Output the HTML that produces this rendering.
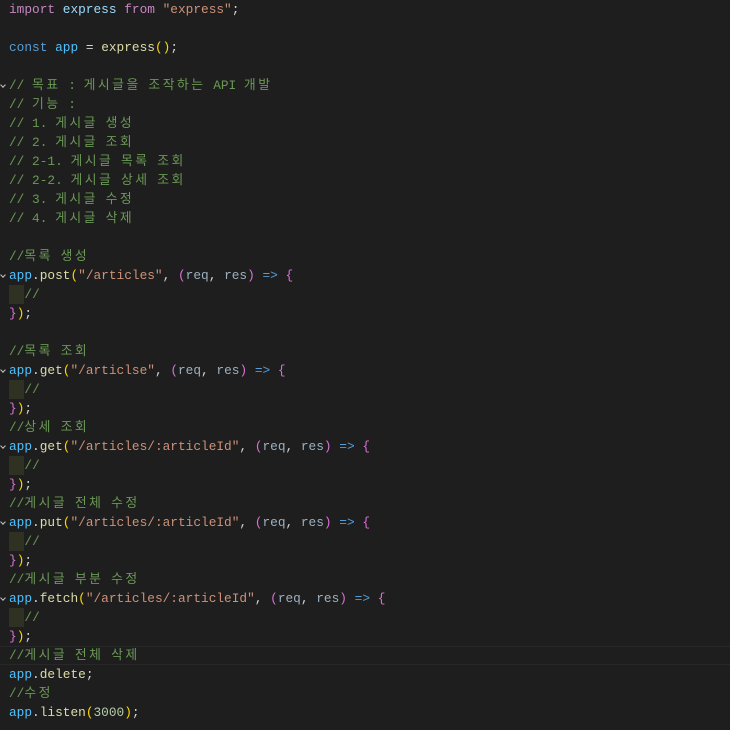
<!DOCTYPE html><html><head><style>
body{margin:0;background:#1e1e1e;width:730px;height:730px;overflow:hidden}
.e{margin:0;padding:0 0 0 9px;font:12.8px/19px "Liberation Mono","Noto Sans CJK KR",monospace;color:#d4d4d4;position:relative}
.l{height:19px;white-space:pre;position:relative}
.k{color:#c586c0}.v{color:#9cdcfe}.f{color:#dcdcaa}.s{color:#ce9178}.c{color:#6a9955}.b{color:#569cd6}.a{color:#4fc1ff}.p{color:#9cb0c0}
.y{color:#ffd700}.m{color:#da70d6}.u{color:#179fff}.n{color:#b5cea8}
.h{letter-spacing:2.5px}
.fold:before{content:"";position:absolute;left:-8px;top:7px;width:3px;height:3px;border-right:1px solid #c5c5c5;border-bottom:1px solid #c5c5c5;transform:rotate(45deg)}
.ind{display:inline-block;width:15.4px;height:19px;background:#2f3122;vertical-align:top}
.cur{box-shadow:inset 0 1px 0 #282828,inset 0 -1px 0 #282828;margin-left:-9px;padding-left:9px}
</style></head><body><div class="e"><div class="l"><span class="k">import</span> <span class="v">express</span> <span class="k">from</span> <span class="s">"express"</span>;</div><div class="l"></div><div class="l"><span class="b">const</span> <span class="a">app</span> = <span class="f">express</span><span class="y">()</span>;</div><div class="l"></div><div class="l fold c">// <span class="h">목표</span> : <span class="h">게시글을</span> <span class="h">조작하는</span> API <span class="h">개발</span></div><div class="l c">// <span class="h">기능</span> :</div><div class="l c">// 1. <span class="h">게시글</span> <span class="h">생성</span></div><div class="l c">// 2. <span class="h">게시글</span> <span class="h">조회</span></div><div class="l c">// 2-1. <span class="h">게시글</span> <span class="h">목록</span> <span class="h">조회</span></div><div class="l c">// 2-2. <span class="h">게시글</span> <span class="h">상세</span> <span class="h">조회</span></div><div class="l c">// 3. <span class="h">게시글</span> <span class="h">수정</span></div><div class="l c">// 4. <span class="h">게시글</span> <span class="h">삭제</span></div><div class="l"></div><div class="l c">//<span class="h">목록</span> <span class="h">생성</span></div><div class="l fold"><span class="a">app</span>.<span class="f">post</span><span class="y">(</span><span class="s">"/articles"</span>, <span class="m">(</span><span class="p">req</span>, <span class="p">res</span><span class="m">)</span> <span class="b">=&gt;</span> <span class="m">{</span></div><div class="l"><span class="ind"></span><span class="c">//</span></div><div class="l"><span class="m">}</span><span class="y">)</span>;</div><div class="l"></div><div class="l c">//<span class="h">목록</span> <span class="h">조회</span></div><div class="l fold"><span class="a">app</span>.<span class="f">get</span><span class="y">(</span><span class="s">"/articlse"</span>, <span class="m">(</span><span class="p">req</span>, <span class="p">res</span><span class="m">)</span> <span class="b">=&gt;</span> <span class="m">{</span></div><div class="l"><span class="ind"></span><span class="c">//</span></div><div class="l"><span class="m">}</span><span class="y">)</span>;</div><div class="l c">//<span class="h">상세</span> <span class="h">조회</span></div><div class="l fold"><span class="a">app</span>.<span class="f">get</span><span class="y">(</span><span class="s">"/articles/:articleId"</span>, <span class="m">(</span><span class="p">req</span>, <span class="p">res</span><span class="m">)</span> <span class="b">=&gt;</span> <span class="m">{</span></div><div class="l"><span class="ind"></span><span class="c">//</span></div><div class="l"><span class="m">}</span><span class="y">)</span>;</div><div class="l c">//<span class="h">게시글</span> <span class="h">전체</span> <span class="h">수정</span></div><div class="l fold"><span class="a">app</span>.<span class="f">put</span><span class="y">(</span><span class="s">"/articles/:articleId"</span>, <span class="m">(</span><span class="p">req</span>, <span class="p">res</span><span class="m">)</span> <span class="b">=&gt;</span> <span class="m">{</span></div><div class="l"><span class="ind"></span><span class="c">//</span></div><div class="l"><span class="m">}</span><span class="y">)</span>;</div><div class="l c">//<span class="h">게시글</span> <span class="h">부분</span> <span class="h">수정</span></div><div class="l fold"><span class="a">app</span>.<span class="f">fetch</span><span class="y">(</span><span class="s">"/articles/:articleId"</span>, <span class="m">(</span><span class="p">req</span>, <span class="p">res</span><span class="m">)</span> <span class="b">=&gt;</span> <span class="m">{</span></div><div class="l"><span class="ind"></span><span class="c">//</span></div><div class="l"><span class="m">}</span><span class="y">)</span>;</div><div class="l c cur">//<span class="h">게시글</span> <span class="h">전체</span> <span class="h">삭제</span></div><div class="l"><span class="a">app</span>.<span class="f">delete</span>;</div><div class="l c">//<span class="h">수정</span></div><div class="l"><span class="a">app</span>.<span class="f">listen</span><span class="y">(</span><span class="n">3000</span><span class="y">)</span>;</div></div></body></html>
